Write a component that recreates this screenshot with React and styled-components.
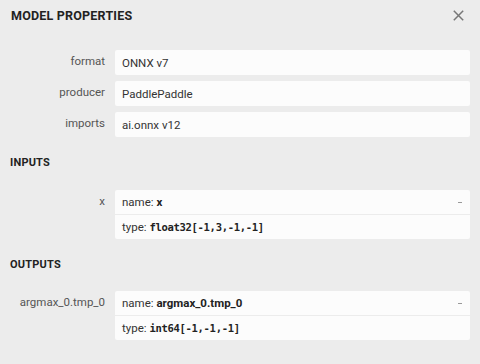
import React from "react";
import styled, { createGlobalStyle } from "styled-components";

const Global = createGlobalStyle`
  html, body { margin: 0; padding: 0; background: #ececec; }
  body { font-family: Roboto, "Noto Sans", sans-serif; }
  * { box-sizing: border-box; }
`;

const Panel = styled.div`
  width: 480px;
  height: 364px;
  background: #ececec;
  overflow: hidden;
  display: flex;
  flex-direction: column;
`;

const Header = styled.div`
  display: flex;
  align-items: center;
  justify-content: space-between;
  height: 31px;
  padding: 0 16px 0 11px;
`;

const Title = styled.div`
  font-size: 12.5px;
  font-weight: 700;
  color: #222;
  letter-spacing: 0.2px;
`;

const Close = styled.button`
  border: 0;
  background: none;
  padding: 0;
  width: 11px;
  height: 11px;
  display: flex;
  cursor: pointer;
`;

const Content = styled.div`
  display: flex;
  flex-direction: column;
  padding: 19px 10px 0 0;
`;

const Rows = styled.div`
  display: flex;
  flex-direction: column;
  gap: 6px;
`;

const Row = styled.div`
  display: flex;
  align-items: flex-start;
`;

const Label = styled.div`
  width: 105px;
  flex: none;
  text-align: right;
  margin-right: 10px;
  font-size: 11.5px;
  color: #555;
  line-height: 23px;
  white-space: nowrap;
`;

const Box = styled.div`
  flex: 1;
  background: #fcfcfc;
  border-radius: 2px;
  display: flex;
  flex-direction: column;
`;

const Line = styled.div`
  height: ${(p) => p.$h}px;
  display: flex;
  align-items: center;
  padding: 0 8px 0 7px;
  font-size: 11.5px;
  color: #333;
  border-top: ${(p) => (p.$sep ? "1px solid #ececec" : "none")};
  white-space: nowrap;
`;

const Grow = styled.span`
  flex: 1;
`;

const Bold = styled.b`
  font-weight: 700;
  color: #222;
`;

const Mono = styled.code`
  font-family: "DejaVu Sans Mono", "Liberation Mono", monospace;
  font-size: 10.5px;
  letter-spacing: -0.3px;
  font-weight: 700;
  color: #222;
`;

const Dash = styled.span`
  width: 4px;
  height: 1px;
  background: #999;
`;

const Section = styled.div`
  font-size: 11px;
  font-weight: 700;
  color: #222;
  padding: ${(p) => p.$pad};
  margin-left: 10px;
  line-height: 14px;
  letter-spacing: 0.2px;
`;

function Field({ name, value }) {
  return (
    <Row>
      <Label>{name}</Label>
      <Box>
        <Line $h={25}>{value}</Line>
      </Box>
    </Row>
  );
}

function Arg({ label, name, type }) {
  return (
    <Row>
      <Label>{label}</Label>
      <Box>
        <Line $h={24}>
          <Grow>
            name: <Bold>{name}</Bold>
          </Grow>
          <Dash />
        </Line>
        <Line $h={25} $sep>
          <span>
            type: <Mono>{type}</Mono>
          </span>
        </Line>
      </Box>
    </Row>
  );
}

export default function App() {
  return (
    <Panel>
      <Global />
      <Header>
        <Title>MODEL PROPERTIES</Title>
        <Close aria-label="close">
          <svg width="11" height="11" viewBox="0 0 11 11">
            <path d="M0.8 0.8 L10.2 10.2 M10.2 0.8 L0.8 10.2" stroke="#777" strokeWidth="1.5" fill="none" />
          </svg>
        </Close>
      </Header>
      <Content>
        <Rows>
          <Field name="format" value="ONNX v7" />
          <Field name="producer" value="PaddlePaddle" />
          <Field name="imports" value="ai.onnx v12" />
        </Rows>
        <Section $pad="19px 0 20px">INPUTS</Section>
        <Arg label="x" name="x" type="float32[-1,3,-1,-1]" />
        <Section $pad="19px 0 19px">OUTPUTS</Section>
        <Arg label="argmax_0.tmp_0" name="argmax_0.tmp_0" type="int64[-1,-1,-1]" />
      </Content>
    </Panel>
  );
}
